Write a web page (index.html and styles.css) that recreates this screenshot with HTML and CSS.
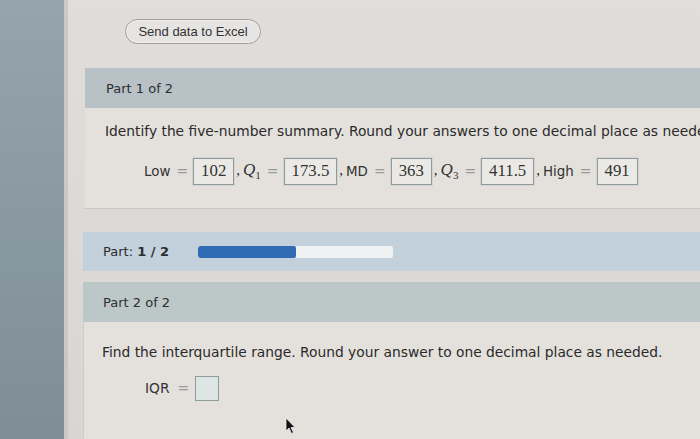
FILE: index.html
```html
<!DOCTYPE html>
<html>
<head>
<meta charset="utf-8">
<link rel="stylesheet" href="styles.css">
</head>
<body>
<div class="strip"></div>
<div class="main">
  <div class="toolbar">
    <button class="excel">Send data to Excel</button>
  </div>

  <section class="part part1">
    <div class="part-head">Part 1 of 2</div>
    <div class="part-body">
      <p class="prompt">Identify the five-number summary. Round your answers to one decimal place as needed.</p>
      <div class="formula">
        <span class="lbl">Low</span><span class="eq">=</span><span class="box">102</span>
        <span class="comma">,</span><span class="q">Q<sub>1</sub></span><span class="eq">=</span><span class="box">173.5</span>
        <span class="comma">,</span><span class="lbl">MD</span><span class="eq">=</span><span class="box">363</span>
        <span class="comma">,</span><span class="q">Q<sub>3</sub></span><span class="eq">=</span><span class="box">411.5</span>
        <span class="comma">,</span><span class="lbl">High</span><span class="eq">=</span><span class="box">491</span>
      </div>
    </div>
  </section>

  <div class="progress">
    <span class="plabel">Part: <b>1 / 2</b></span>
    <div class="track"><div class="fill"></div></div>
  </div>

  <section class="part part2">
    <div class="part-head">Part 2 of 2</div>
    <div class="part-body body2">
      <p class="prompt">Find the interquartile range. Round your answer to one decimal place as needed.</p>
      <div class="formula iqr">
        <span class="lbl">IQR</span><span class="eq">=</span><span class="empty"></span>
      </div>
    </div>
  </section>
</div>
<svg class="cursor" width="12" height="18" viewBox="0 0 12 18"><path d="M1 1 L1 14 L4 11 L6.5 16.5 L8.5 15.5 L6 10.5 L10 10.5 Z" fill="#111" stroke="#eee" stroke-width="0.8"/></svg>
</body>
</html>
```

FILE: styles.css
```css
html, body {
  margin: 0;
  padding: 0;
  width: 700px;
  height: 439px;
  overflow: hidden;
}
body {
  display: flex;
  background: #d9d6d4;
  font-family: "DejaVu Sans", Verdana, sans-serif;
  color: #2b2b2b;
  position: relative;
}
.strip {
  width: 64px;
  flex: none;
  background: linear-gradient(180deg, #95a4ad 0%, #8797a0 60%, #7e8d96 100%);
  border-right: 4px solid #c9c9c9;
}
.main {
  flex: 1;
  display: flex;
  flex-direction: column;
  min-width: 0;
  background: linear-gradient(180deg, #e0dddb 0%, #d8d5d3 100%);
}
.toolbar {
  height: 44px;
  display: flex;
  align-items: flex-end;
  padding-left: 57px;
}
.excel {
  height: 25px;
  width: 136px;
  border: 1px solid #9e9e9e;
  border-radius: 13px;
  background: #e6e4e2;
  font-family: "Liberation Sans", Arial, sans-serif;
  font-size: 13px;
  color: #333;
  padding: 0;
  box-shadow: inset 0 0 0 1px #f2f0ee;
}
.part {
  display: flex;
  flex-direction: column;
}
.part1 {
  margin-top: 24px;
  margin-left: 17px;
}
.part-head {
  height: 40px;
  display: flex;
  align-items: center;
  padding-left: 21px;
  background: #b7c1c6;
  font-size: 13px;
  color: #2e2e2e;
}
.part-body {
  background: #e4e1dd;
  padding: 14px 0 0 20px;
  height: 86px;
  border-bottom: 1px solid #c9c6c3;
  white-space: nowrap;
  overflow: hidden;
}
.prompt {
  margin: 0;
  font-size: 13.8px;
  line-height: 18px;
  color: #2a2a2a;
  white-space: nowrap;
}
.formula {
  display: flex;
  align-items: center;
  margin-top: 17px;
  margin-left: 39px;
  height: 28px;
  font-size: 13.4px;
}
.lbl {
  color: #333;
}
.eq {
  color: #9a9a9a;
  margin: 0 5px 0 6px;
  font-size: 14px;
}
.box {
  height: 25px;
  display: flex;
  align-items: center;
  padding: 0 7px;
  border: 1px solid #8e9a9c;
  background: #ebe9e5;
  font-family: "Liberation Serif", "Times New Roman", serif;
  font-size: 16.8px;
  color: #333;
  box-shadow: 0 0 0 1px #d6d4d0;
}
.comma {
  font-family: "Liberation Serif", serif;
  font-size: 15px;
  margin: 0 3px 0 2px;
  align-self: flex-end;
  padding-bottom: 6px;
}
.q {
  font-family: "Liberation Serif", serif;
  font-style: italic;
  font-size: 17px;
  color: #333;
}
.q sub {
  font-style: normal;
  font-size: 11px;
}
.progress {
  margin-top: 23px;
  margin-left: 15px;
  height: 39px;
  background: #c3d1dc;
  display: flex;
  align-items: center;
  padding-left: 20px;
}
.plabel {
  font-size: 13px;
  color: #2c2c2c;
  width: 95px;
}
.track {
  width: 195px;
  height: 12px;
  background: #eef0f1;
  border-radius: 2px;
  overflow: hidden;
}
.fill {
  width: 98px;
  height: 100%;
  background: #2f6cb4;
  border-radius: 2px;
}
.part2 {
  margin-top: 11px;
  margin-left: 15px;
  flex: 1;
}
.part2 .part-head {
  background: #bcc7c8;
  padding-left: 20px;
}
.body2 {
  flex: 1;
  padding: 21px 0 0 18px;
  border: none;
  border-left: 1px solid #cfccc9;
}
.iqr {
  margin-top: 13px;
  margin-left: 43px;
}
.iqr .lbl {
  font-size: 13.8px;
}
.iqr .eq {
  margin: 0 6px 0 8px;
}
.empty {
  width: 22px;
  height: 23px;
  border: 1px solid #8e9c9c;
  background: #dde6e4;
}
.cursor {
  position: absolute;
  left: 285px;
  top: 417px;
}
```
